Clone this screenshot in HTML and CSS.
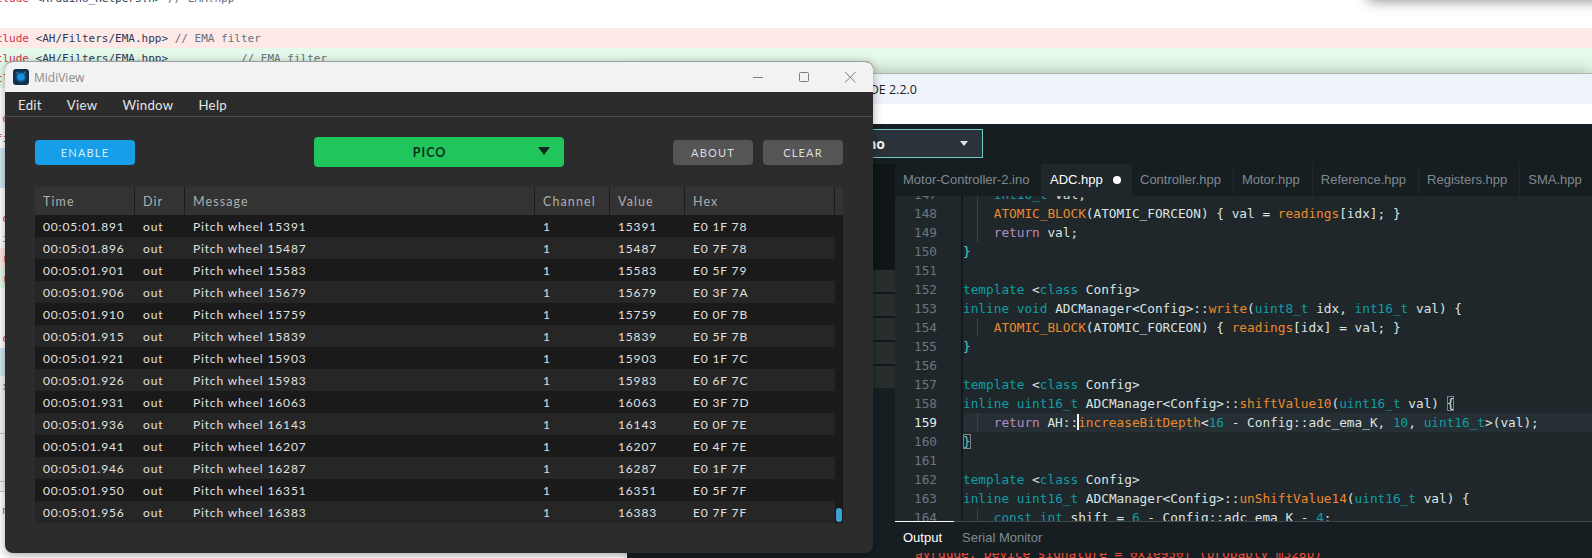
FILE: index.html
```html
<!DOCTYPE html>
<html lang="en">
<head>
<meta charset="utf-8">
<title>MidiView</title>
<link rel="stylesheet" href="styles.css">
</head>
<body>
<div class="desktop">

  <section class="diff">
    <div class="d-row h20"><span class="kw">#include</span> &lt;Arduino_Helpers.h&gt; <span class="cm">// EMA.hpp</span></div>
    <div class="d-row h20"></div>
    <div class="d-row h20 del"><span class="kw">#include</span> &lt;AH/Filters/EMA.hpp&gt; <span class="cm">// EMA filter</span></div>
    <div class="d-row h20 add"><span class="kw">#include</span> &lt;AH/Filters/EMA.hpp&gt;           <span class="cm">// EMA filter</span></div>
    <div class="d-row h20 add"><span class="kw">#include</span> &lt;util/atomic.h&gt;</div>
    <div class="d-row h20"></div>
    <div class="d-row h20"><span class="kw">#if</span> <span class="kw">defined</span></div>
    <div class="d-row h20"><span class="kw">#def</span>ine</div>
    <div class="d-row h40 hunk">@@ -18,7 +18,7 @@</div>
    <div class="d-row h20"></div>
    <div class="d-row h20"><span class="kw">#if</span> <span class="kw">defined</span></div>
    <div class="d-row h20">    <span class="kw">int</span> x;</div>
    <div class="d-row h20 del">    <span class="kw">reg</span></div>
    <div class="d-row h20 add">    <span class="kw">reg</span></div>
    <div class="d-row h40"></div>
    <div class="d-row h20"><span class="kw">#if</span> <span class="kw">defined</span></div>
    <div class="d-row h28 hunk"></div>
    <div class="d-row h58 ruled">    <span class="cm">x</span></div>
    <div class="d-row h48 ruled"></div>
    <div class="d-row h10 ruled"></div>
    <div class="d-row h8"></div>
    <div class="d-row h20">    <span class="cm">m</span></div>
  </section>

  <div class="menu-shadow"></div>

  <section class="ide">
    <header class="ide-title"><span class="ide-title-text">Motor-Controller-2 | Arduino IDE 2.2.0</span></header>
    <div class="ide-band"></div>
    <div class="ide-toolbar">
      <div class="board">
        <span class="board-name">Arduino Nano</span>
        <span class="board-arrow"></span>
      </div>
    </div>
    <div class="ide-main">
      <aside class="ide-side">
        <div class="side-top"></div>
        <div class="side-row"></div>
        <div class="side-row"></div>
        <div class="side-row"></div>
        <div class="side-row"></div>
        <div class="side-row"></div>
      </aside>
      <div class="ide-work">
        <nav class="tabs">
          <div class="tab tab-first">Motor-Controller-2.ino</div>
          <div class="tab tab-active">ADC.hpp<span class="tab-dot"></span></div>
          <div class="tab">Controller.hpp</div>
          <div class="tab">Motor.hpp</div>
          <div class="tab">Reference.hpp</div>
          <div class="tab">Registers.hpp</div>
          <div class="tab">SMA.hpp</div>
        </nav>
        <div class="editor">
          <div class="lines">
            <div class="ln"><span class="num">147</span><code class="src ind"><span class="k">int16_t</span> val;</code></div>
            <div class="ln"><span class="num">148</span><code class="src ind"><span class="f">ATOMIC_BLOCK</span>(ATOMIC_FORCEON) { val = <span class="f">readings</span>[idx]; }</code></div>
            <div class="ln"><span class="num">149</span><code class="src ind"><span class="r">return</span> val;</code></div>
            <div class="ln"><span class="num">150</span><code class="src"><span class="b">}</span></code></div>
            <div class="ln"><span class="num">151</span><code class="src"></code></div>
            <div class="ln"><span class="num">152</span><code class="src"><span class="k">template</span> &lt;<span class="k">class</span> Config&gt;</code></div>
            <div class="ln"><span class="num">153</span><code class="src"><span class="k">inline</span> <span class="k">void</span> ADCManager&lt;Config&gt;::<span class="f">write</span>(<span class="k">uint8_t</span> idx, <span class="k">int16_t</span> val) {</code></div>
            <div class="ln"><span class="num">154</span><code class="src ind"><span class="f">ATOMIC_BLOCK</span>(ATOMIC_FORCEON) { <span class="f">readings</span>[idx] = val; }</code></div>
            <div class="ln"><span class="num">155</span><code class="src"><span class="b">}</span></code></div>
            <div class="ln"><span class="num">156</span><code class="src"></code></div>
            <div class="ln"><span class="num">157</span><code class="src"><span class="k">template</span> &lt;<span class="k">class</span> Config&gt;</code></div>
            <div class="ln"><span class="num">158</span><code class="src"><span class="k">inline</span> <span class="k">uint16_t</span> ADCManager&lt;Config&gt;::<span class="f">shiftValue10</span>(<span class="k">uint16_t</span> val) <span class="match">{</span></code></div>
            <div class="ln ln-active"><span class="num">159</span><code class="src ind"><span class="r">return</span> AH::<span class="caret"></span><span class="f">increaseBitDepth</span>&lt;<span class="k">16</span> - Config::adc_ema_K, <span class="k">10</span>, <span class="k">uint16_t</span>&gt;(val);</code></div>
            <div class="ln"><span class="num">160</span><code class="src"><span class="match b">}</span></code></div>
            <div class="ln"><span class="num">161</span><code class="src"></code></div>
            <div class="ln"><span class="num">162</span><code class="src"><span class="k">template</span> &lt;<span class="k">class</span> Config&gt;</code></div>
            <div class="ln"><span class="num">163</span><code class="src"><span class="k">inline</span> <span class="k">uint16_t</span> ADCManager&lt;Config&gt;::<span class="f">unShiftValue14</span>(<span class="k">uint16_t</span> val) {</code></div>
            <div class="ln"><span class="num">164</span><code class="src ind"><span class="k">const</span> <span class="k">int</span> shift = <span class="k">6</span> - Config::adc_ema_K - <span class="k">4</span>;</code></div>
          </div>
        </div>
        <div class="out-tabs">
          <div class="out-tab out-active">Output</div>
          <div class="out-tab">Serial Monitor</div>
        </div>
        <div class="console"><code class="console-line">avrdude: Device signature = 0x1e950f (probably m328p)</code></div>
      </div>
    </div>
  </section>

  <section class="midi">
    <header class="mv-title">
      <div class="mv-name">
        <svg class="mv-logo" viewBox="0 0 16 16" width="16" height="16" aria-hidden="true">
          <rect width="16" height="16" rx="3" fill="#12314a"/>
          <circle cx="8" cy="8" r="5.6" fill="#0e4f7c"/>
          <circle cx="8" cy="8" r="3.8" fill="#1c8fdc"/>
          <circle cx="4" cy="3.4" r="1" fill="#3f6c8c"/>
          <circle cx="12" cy="3.4" r="1" fill="#3f6c8c"/>
        </svg>
        <span>MidiView</span>
      </div>
      <div class="mv-controls">
        <svg class="mv-ctl" viewBox="0 0 46 30" width="46" height="30" aria-hidden="true"><path d="M18 15.500h10"/></svg>
        <svg class="mv-ctl" viewBox="0 0 46 30" width="46" height="30" aria-hidden="true"><rect x="18.500" y="10.500" width="9" height="9" rx="1"/></svg>
        <svg class="mv-ctl" viewBox="0 0 46 30" width="46" height="30" aria-hidden="true"><path d="M18 10l10.500 10.500M28.500 10l-10.500 10.500"/></svg>
      </div>
    </header>
    <nav class="mv-menu">
      <span>Edit</span><span>View</span><span>Window</span><span>Help</span>
    </nav>
    <div class="mv-bar">
      <button class="btn btn-blue" type="button">ENABLE</button>
      <div class="select"><span class="select-label">PICO</span><span class="select-arrow"></span></div>
      <div class="btn-group">
        <button class="btn btn-grey" type="button">ABOUT</button>
        <button class="btn btn-grey" type="button">CLEAR</button>
      </div>
    </div>
    <div class="grid-table">
      <div class="tr th"><div>Time</div><div>Dir</div><div>Message</div><div>Channel</div><div>Value</div><div>Hex</div><div></div></div>
      <div class="tr"><div>00:05:01.891</div><div>out</div><div>Pitch wheel 15391</div><div>1</div><div>15391</div><div>E0 1F 78</div><div class="sb"></div></div>
      <div class="tr"><div>00:05:01.896</div><div>out</div><div>Pitch wheel 15487</div><div>1</div><div>15487</div><div>E0 7F 78</div><div class="sb"></div></div>
      <div class="tr"><div>00:05:01.901</div><div>out</div><div>Pitch wheel 15583</div><div>1</div><div>15583</div><div>E0 5F 79</div><div class="sb"></div></div>
      <div class="tr"><div>00:05:01.906</div><div>out</div><div>Pitch wheel 15679</div><div>1</div><div>15679</div><div>E0 3F 7A</div><div class="sb"></div></div>
      <div class="tr"><div>00:05:01.910</div><div>out</div><div>Pitch wheel 15759</div><div>1</div><div>15759</div><div>E0 0F 7B</div><div class="sb"></div></div>
      <div class="tr"><div>00:05:01.915</div><div>out</div><div>Pitch wheel 15839</div><div>1</div><div>15839</div><div>E0 5F 7B</div><div class="sb"></div></div>
      <div class="tr"><div>00:05:01.921</div><div>out</div><div>Pitch wheel 15903</div><div>1</div><div>15903</div><div>E0 1F 7C</div><div class="sb"></div></div>
      <div class="tr"><div>00:05:01.926</div><div>out</div><div>Pitch wheel 15983</div><div>1</div><div>15983</div><div>E0 6F 7C</div><div class="sb"></div></div>
      <div class="tr"><div>00:05:01.931</div><div>out</div><div>Pitch wheel 16063</div><div>1</div><div>16063</div><div>E0 3F 7D</div><div class="sb"></div></div>
      <div class="tr"><div>00:05:01.936</div><div>out</div><div>Pitch wheel 16143</div><div>1</div><div>16143</div><div>E0 0F 7E</div><div class="sb"></div></div>
      <div class="tr"><div>00:05:01.941</div><div>out</div><div>Pitch wheel 16207</div><div>1</div><div>16207</div><div>E0 4F 7E</div><div class="sb"></div></div>
      <div class="tr"><div>00:05:01.946</div><div>out</div><div>Pitch wheel 16287</div><div>1</div><div>16287</div><div>E0 1F 7F</div><div class="sb"></div></div>
      <div class="tr"><div>00:05:01.950</div><div>out</div><div>Pitch wheel 16351</div><div>1</div><div>16351</div><div>E0 5F 7F</div><div class="sb"></div></div>
      <div class="tr"><div>00:05:01.956</div><div>out</div><div>Pitch wheel 16383</div><div>1</div><div>16383</div><div>E0 7F 7F</div><div class="sb sb-thumb"></div></div>
    </div>
  </section>
</div>
</body>
</html>
```
FILE: styles.css
```css
* { box-sizing: border-box; }
html, body { margin: 0; padding: 0; }
body { width: 1592px; height: 558px; overflow: hidden; background: #fff; }
.desktop { position: relative; width: 1592px; height: 558px; overflow: hidden; background: #fff; }

/* back window: the diff */
.diff {
  position: absolute; left: -24px; top: -12px; width: 1640px;
  display: flex; flex-direction: column;
  font: 11px/21px "DejaVu Sans Mono", monospace; color: #2b3a55;
  background: #fafafa;
}
.d-row { white-space: pre; background: #fff; overflow: hidden; }
.h8 { height: 8px; } .h10 { height: 10px; } .h20 { height: 20px; } .h28 { height: 28px; }
.h40 { height: 40px; } .h48 { height: 48px; } .h58 { height: 58px; }
.del { background: #ffe9e7; }
.add { background: #e5faea; }
.hunk { background: #d3e7f2; color: #d3e7f2; }
.ruled { background: #f4f4f4; border-bottom: 1px solid #c4c8cc; }
.kw { color: #d4344a; }
.cm { color: #66717d; }
.menu-shadow {
  position: absolute; left: 1368px; top: -30px; width: 300px; height: 30px;
  box-shadow: 0 0 14px rgba(0, 0, 0, .5);
}

/* IDE window */
.ide {
  position: absolute; left: 627px; top: 73px; width: 965px; height: 485px;
  display: flex; flex-direction: column; overflow: hidden;
  background: #171e22; border-top: 1px solid #a9b5ad;
  box-shadow: 0 -3px 14px rgba(0, 0, 0, .22);
}
.ide-title {
  height: 30px; flex: none; display: flex; align-items: center;
  background: #eef2fa; color: #222;
  font: 12.5px "Open Sans", sans-serif;
}
.ide-title-text { width: 290px; text-align: right; white-space: nowrap; }
.ide-band { height: 20px; flex: none; background: #fff; }
.ide-toolbar { height: 40px; flex: none; padding: 5px 0 6px 73px; background: #171e22; }
.board {
  width: 283px; height: 29px; display: flex; align-items: center;
  background: #2a333a; border: 1px solid #6fc9c4;
  color: #f2f5f5; font: bold 14px "Open Sans", sans-serif;
}
.board-name { width: 184px; text-align: right; white-space: nowrap; overflow: hidden; }
.board-arrow {
  margin-left: auto; margin-right: 14px; width: 0; height: 0;
  border-left: 4px solid transparent; border-right: 4px solid transparent;
  border-top: 5px solid #dfe6e6;
}
.ide-main { flex: 1; min-height: 0; display: flex; }
.ide-side { width: 268px; flex: none; display: flex; flex-direction: column; background: #171e22; }
.side-top { height: 106px; background: #101518; }
.side-row { height: 24px; background: #282d2e; border-bottom: 2px solid #11171a; }
.side-row:last-child { height: 22px; border-bottom: 0; }
.ide-work { flex: 1; min-width: 0; display: flex; flex-direction: column; }

.tabs {
  height: 32px; flex: none; display: flex; background: #171e22;
  font: 13px/32px "Liberation Sans", Arial, sans-serif; color: #7f8a8f;
}
.tab { padding: 0 12px 0 8px; border-right: 1px solid #20282c; white-space: nowrap; }
.tab-first { width: 146px; border-right: 0; }
.tab-active { width: 91px; padding-left: 9px; background: #1f272b; color: #fff; border-right: 0; display: flex; align-items: center; }
.tab-dot { width: 8px; height: 8px; border-radius: 50%; background: #fff; margin-left: 10px; flex: none; }

.editor { flex: 1; min-height: 0; overflow: hidden; background: #1f272b; }
.lines { margin-top: -11px; }
.ln { display: flex; height: 19px; }
.num {
  flex: none; width: 42px; text-align: right; color: #6c777c;
  font: 12.75px/19px "DejaVu Sans Mono", monospace;
}
.ln-active .num { color: #e6ecec; }
.src {
  position: relative; flex: 1; display: block; margin-left: 24px;
  border-left: 2px solid #12181b; white-space: pre; color: #dbe4e4;
  font: 12.75px/19px "DejaVu Sans Mono", monospace;
}
.ind { padding-left: 4ch; }
.ind::before {
  content: ""; position: absolute; left: 14px; top: 0; bottom: 0; width: 1px; background: #3a4448;
}
.ln-active .src { background: #262f34; }
.k { color: #0f9ea3; }
.f { color: #ea8a2c; }
.r { color: #b78ac0; }
.b { color: #5cc8d0; }
.match { outline: 1px solid #7c8488; outline-offset: -1px; }
.caret {
  display: inline-block; width: 2px; height: 16px; margin: 0 -1px; vertical-align: -3px; background: #f4f4f4;
}

.out-tabs {
  height: 32px; flex: none; display: flex; background: #171e22;
  border-top: 1px solid #3f474b;
  font: 13px/31px "Liberation Sans", Arial, sans-serif; color: #7f8a8f;
}
.out-tab { padding: 0 12px 0 8px; margin-top: -1px; border-top: 1px solid transparent; }
.out-active { color: #fff; border-top-color: #fff; }
.console { height: 5px; flex: none; overflow: hidden; padding-left: 20px; }
.console-line {
  display: block; margin-top: -9px; white-space: pre; color: #ef4c3a;
  font: 12.75px/19px "DejaVu Sans Mono", monospace;
}

/* foreground window */
.midi {
  position: absolute; left: 5px; top: 61px; width: 868px; height: 492px;
  display: flex; flex-direction: column; overflow: hidden;
  background: #2c2c2c; border-top: 1px solid #9aa09c;
  border-radius: 8px;
  box-shadow: 0 2px 10px rgba(0, 0, 0, .35);
  font-family: Lato, sans-serif;
}
.mv-title {
  height: 30px; flex: none; display: flex; align-items: center; justify-content: space-between;
  background: #f2f2f2; padding-left: 8px;
}
.mv-name { display: flex; align-items: center; gap: 5px; color: #8b8b8b; font: 12px "Open Sans", sans-serif; }
.mv-logo { display: block; }
.mv-controls { display: flex; }
.mv-ctl { display: block; fill: none; stroke: #7d7d7d; stroke-width: 1; }
.mv-menu {
  height: 25px; flex: none; display: flex; gap: 25px; align-items: center;
  padding: 1px 0 0 13px; color: #e6e6e6; font-size: 13.2px; letter-spacing: .3px;
  border-bottom: 1px solid #4a4a4a;
}
.mv-bar {
  height: 70px; flex: none; display: grid; grid-template-columns: 1fr 250px 1fr; align-items: center;
  padding: 0 30px;
}
.btn {
  width: 100px; height: 25px; padding: 0; border: 0; border-radius: 4px;
  font: 11px Lato, sans-serif; letter-spacing: 1.2px;
}
.btn-blue { background: #179ee8; color: #d4eefc; }
.btn-grey { width: 80px; background: #555; color: #dcdcdc; }
.btn-group { display: flex; gap: 10px; justify-content: flex-end; }
.select {
  height: 30px; display: flex; align-items: center; border-radius: 4px;
  background: #20c65c; color: #0b2e18; font: bold 12.5px Lato, sans-serif; letter-spacing: 1px;
}
.select-label { flex: 1; text-align: center; padding-left: 7px; }
.select-arrow {
  margin: 0 14px 3px 0; width: 0; height: 0;
  border-left: 6px solid transparent; border-right: 6px solid transparent;
  border-top: 8px solid #102a1a;
}
.grid-table { margin: 0 30px; color: #e0e0e0; font-size: 12px; letter-spacing: .85px; }
.tr { display: grid; grid-template-columns: 100px 50px 350px 75px 75px 150px 8px; height: 22px; line-height: 24px; }
.tr > div { padding-left: 8px; white-space: nowrap; overflow: hidden; height: 22px; }
.tr:nth-child(even) { background: #1a1a1a; }
.tr:nth-child(odd) { background: #262626; }
.tr .sb { background: #1a1a1a; padding: 0; }
.tr.th { height: 28px; line-height: 30px; color: #aeaeae; font-size: 12.5px; letter-spacing: 1.1px; background: #333; }
.tr.th > div { height: 28px; border-right: 1px solid #1c1c1c; }
.tr.th > div:last-child { border-right: 0; }
.tr .sb-thumb { position: relative; }
.sb-thumb::after {
  content: ""; position: absolute; left: 1px; top: 7px; width: 6px; height: 14px;
  border-radius: 3px; background: #3ea2d2;
}
```
